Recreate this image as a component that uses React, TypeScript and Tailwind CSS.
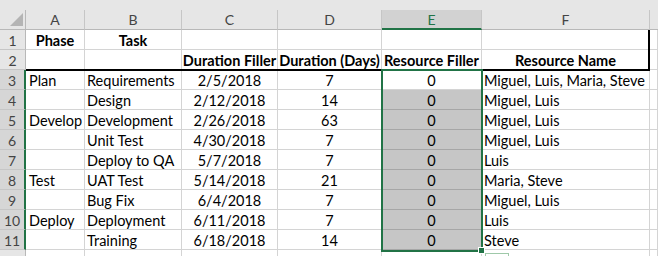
import React from "react";

const rows: string[][] = [
  ["Plan", "Requirements", "2/5/2018", "7", "0", "Miguel, Luis, Maria, Steve"],
  ["", "Design", "2/12/2018", "14", "0", "Miguel, Luis"],
  ["Develop", "Development", "2/26/2018", "63", "0", "Miguel, Luis"],
  ["", "Unit Test", "4/30/2018", "7", "0", "Miguel, Luis"],
  ["", "Deploy to QA", "5/7/2018", "7", "0", "Luis"],
  ["Test", "UAT Test", "5/14/2018", "21", "0", "Maria, Steve"],
  ["", "Bug Fix", "6/4/2018", "7", "0", "Miguel, Luis"],
  ["Deploy", "Deployment", "6/11/2018", "7", "0", "Luis"],
  ["", "Training", "6/18/2018", "14", "0", "Steve"],
];

const font = { fontFamily: "Lato, 'Open Sans', sans-serif" };

function Cell({
  children,
  align = "left",
  bold = false,
  gray = false,
}: {
  children?: React.ReactNode;
  align?: "left" | "center";
  bold?: boolean;
  gray?: boolean;
}) {
  return (
    <div
      className={
        "h-[20px] border-r border-b flex items-center pt-[2px] overflow-visible whitespace-nowrap text-[14.5px] leading-[17px] text-black " +
        (gray ? "bg-[#c6c6c6] border-[#a6a6a6] " : "bg-white border-[#d4d4d4] ") +
        (align === "center" ? "justify-center " : "justify-start pl-[2px] ") +
        (bold ? "font-bold" : "")
      }
    >
      {children}
    </div>
  );
}

function RowHead({ n, sel }: { n?: number; sel?: boolean }) {
  return (
    <div
      className={
        "h-[20px] border-b border-[#c6c6c6] flex items-center justify-center pt-[1px] text-[14px] text-[#444] " +
        (sel
          ? "bg-[#d6d6d6] border-r-2 border-r-[#217346]"
          : "bg-[#e6e6e6] border-r border-r-[#b8b8b8]")
      }
    >
      {n}
    </div>
  );
}

function ColHead({ l, sel }: { l: string; sel?: boolean }) {
  return (
    <div
      className={
        "h-[20px] border-r border-[#c6c6c6] flex items-center justify-center text-[14px] " +
        (sel
          ? "bg-[#d2d2d2] text-[#217346] border-b-2 border-b-[#217346]"
          : "bg-[#e6e6e6] text-[#444] border-b border-b-[#b8b8b8]")
      }
    >
      {l}
    </div>
  );
}

export default function App() {
  return (
    <div className="w-[658px] h-[256px] overflow-hidden bg-white relative" style={font}>
      <div className="h-[10px] bg-[#e6e6e6]" />
      <div className="grid grid-cols-[26px_59px_97px_96px_104px_100px_168px_1fr]">
        {/* header row */}
        <div className="h-[20px] bg-[#e6e6e6] border-r border-b border-[#b8b8b8] relative">
          <svg className="absolute left-[10px] top-[3px]" width="13" height="13" viewBox="0 0 13 13">
            <polygon points="13,0 13,13 0,13" fill="#b4b4b4" />
          </svg>
        </div>
        <ColHead l="A" />
        <ColHead l="B" />
        <ColHead l="C" />
        <ColHead l="D" />
        <ColHead l="E" sel />
        <ColHead l="F" />
        <div className="h-[20px] bg-[#e6e6e6] border-b border-[#b8b8b8]" />

        {/* row 1 */}
        <RowHead n={1} />
        <Cell align="center" bold>Phase</Cell>
        <Cell align="center" bold>Task</Cell>
        <Cell />
        <Cell />
        <Cell />
        <Cell />
        <Cell />

        {/* row 2 */}
        <RowHead n={2} />
        <Cell />
        <Cell />
        <Cell align="center" bold>Duration Filler</Cell>
        <Cell align="center" bold>Duration (Days)</Cell>
        <Cell align="center" bold>Resource Filler</Cell>
        <Cell align="center" bold>Resource Name</Cell>
        <Cell />

        {rows.map((r, i) => (
          <React.Fragment key={i}>
            <RowHead n={i + 3} sel />
            <Cell>{r[0] ? <span className="pl-px">{r[0]}</span> : null}</Cell>
            <Cell>{r[1]}</Cell>
            <Cell align="center">{r[2]}</Cell>
            <Cell align="center">{r[3]}</Cell>
            <Cell align="center" gray={i > 0}>{r[4]}</Cell>
            <Cell>{r[5]}</Cell>
            <Cell />
          </React.Fragment>
        ))}

        <RowHead />
        <Cell />
        <Cell />
        <Cell />
        <Cell />
        <Cell />
        <Cell />
        <Cell />
      </div>

      {/* thick bottom border under row 2 */}
      <div className="absolute left-[26px] top-[69px] w-[624px] h-[2px] bg-black" />
      {/* right border on F1:F2 */}
      <div className="absolute left-[648px] top-[30px] w-[2px] h-[41px] bg-black" />
      {/* selection rectangle */}
      <div className="absolute left-[381px] top-[69px] w-[102px] h-[183px] border-2 border-[#217346]" />
      {/* fill handle */}
      <div className="absolute left-[478px] top-[247px] w-[7px] h-[7px] bg-[#217346] border border-white" />
      {/* quick analysis button edge */}
      <div className="absolute left-[485px] top-[253px] w-[24px] h-[10px] border border-[#9fc9a9] bg-white" />
    </div>
  );
}
